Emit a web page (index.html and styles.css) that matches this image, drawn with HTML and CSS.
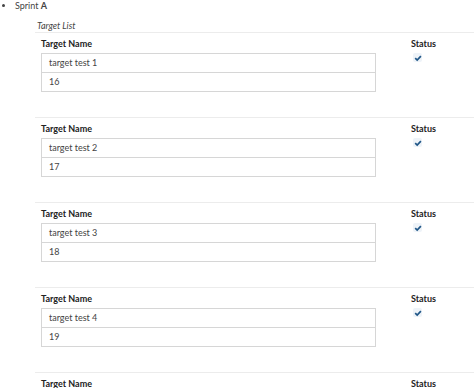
FILE: index.html
```html
<!DOCTYPE html>
<html>
<head>
<meta charset="utf-8">
<link rel="stylesheet" href="styles.css">
</head>
<body>
<ul class="sprints">
  <li class="sprint">
    <span class="sprint-title">Sprint <b>A</b></span>
    <div class="target-list">
      <div class="caption">Target List</div>
      <div class="target">
        <div class="name-col">
          <div class="label">Target Name</div>
          <div class="fields">
            <div class="field">target test 1</div>
            <div class="field">16</div>
          </div>
        </div>
        <div class="status-col">
          <div class="label">Status</div>
          <span class="check"><svg viewBox="0 0 10 10" width="8" height="8"><path d="M1.5 5.2 L4 7.6 L8.6 2.6" fill="none" stroke="#1f5687" stroke-width="2.1"/></svg></span>
        </div>
      </div>
      <div class="target">
        <div class="name-col">
          <div class="label">Target Name</div>
          <div class="fields">
            <div class="field">target test 2</div>
            <div class="field">17</div>
          </div>
        </div>
        <div class="status-col">
          <div class="label">Status</div>
          <span class="check"><svg viewBox="0 0 10 10" width="8" height="8"><path d="M1.5 5.2 L4 7.6 L8.6 2.6" fill="none" stroke="#1f5687" stroke-width="2.1"/></svg></span>
        </div>
      </div>
      <div class="target">
        <div class="name-col">
          <div class="label">Target Name</div>
          <div class="fields">
            <div class="field">target test 3</div>
            <div class="field">18</div>
          </div>
        </div>
        <div class="status-col">
          <div class="label">Status</div>
          <span class="check"><svg viewBox="0 0 10 10" width="8" height="8"><path d="M1.5 5.2 L4 7.6 L8.6 2.6" fill="none" stroke="#1f5687" stroke-width="2.1"/></svg></span>
        </div>
      </div>
      <div class="target">
        <div class="name-col">
          <div class="label">Target Name</div>
          <div class="fields">
            <div class="field">target test 4</div>
            <div class="field">19</div>
          </div>
        </div>
        <div class="status-col">
          <div class="label">Status</div>
          <span class="check"><svg viewBox="0 0 10 10" width="8" height="8"><path d="M1.5 5.2 L4 7.6 L8.6 2.6" fill="none" stroke="#1f5687" stroke-width="2.1"/></svg></span>
        </div>
      </div>
      <div class="target">
        <div class="name-col">
          <div class="label">Target Name</div>
          <div class="fields">
            <div class="field">target test 5</div>
            <div class="field">20</div>
          </div>
        </div>
        <div class="status-col">
          <div class="label">Status</div>
          <span class="check"><svg viewBox="0 0 10 10" width="8" height="8"><path d="M1.5 5.2 L4 7.6 L8.6 2.6" fill="none" stroke="#1f5687" stroke-width="2.1"/></svg></span>
        </div>
      </div>
    </div>
  </li>
</ul>
</body>
</html>
```
FILE: styles.css
```css
html, body {
  margin: 0;
  padding: 0;
  background: #fff;
}
body {
  font-family: "Lato", "Noto Sans", sans-serif;
  font-size: 9px;
  color: #444;
  overflow: hidden;
}
.sprints {
  margin: 0;
  padding: 0 0 0 15px;
  list-style: disc;
}
.sprint-title {
  display: block;
  line-height: 11px;
}
.sprint::marker {
  font-size: 9px;
}
.target-list {
  margin-left: 20px;
  padding-top: 9px;
}
.caption {
  font-style: italic;
  line-height: 12px;
  padding-left: 2px;
}
.target {
  display: flex;
  border-top: 1px solid #ececec;
  padding: 5px 0 25px 6px;
}
.name-col {
  width: 335px;
}
.label {
  font-weight: bold;
  color: #222;
  line-height: 11px;
  margin-bottom: 4px;
}
.fields {
  border: 1px solid #d6d6d6;
}
.field {
  height: 18px;
  line-height: 18px;
  padding-left: 7px;
  color: #444;
}
.field + .field {
  border-top: 1px solid #d6d6d6;
}
.status-col {
  margin-left: 35px;
}
.check {
  display: flex;
  align-items: center;
  justify-content: center;
  width: 9px;
  height: 9px;
  margin-left: 2px;
  margin-top: 1px;
  background: #eef3f8;
  border-radius: 2px;
}
.check svg {
  display: block;
}
```
